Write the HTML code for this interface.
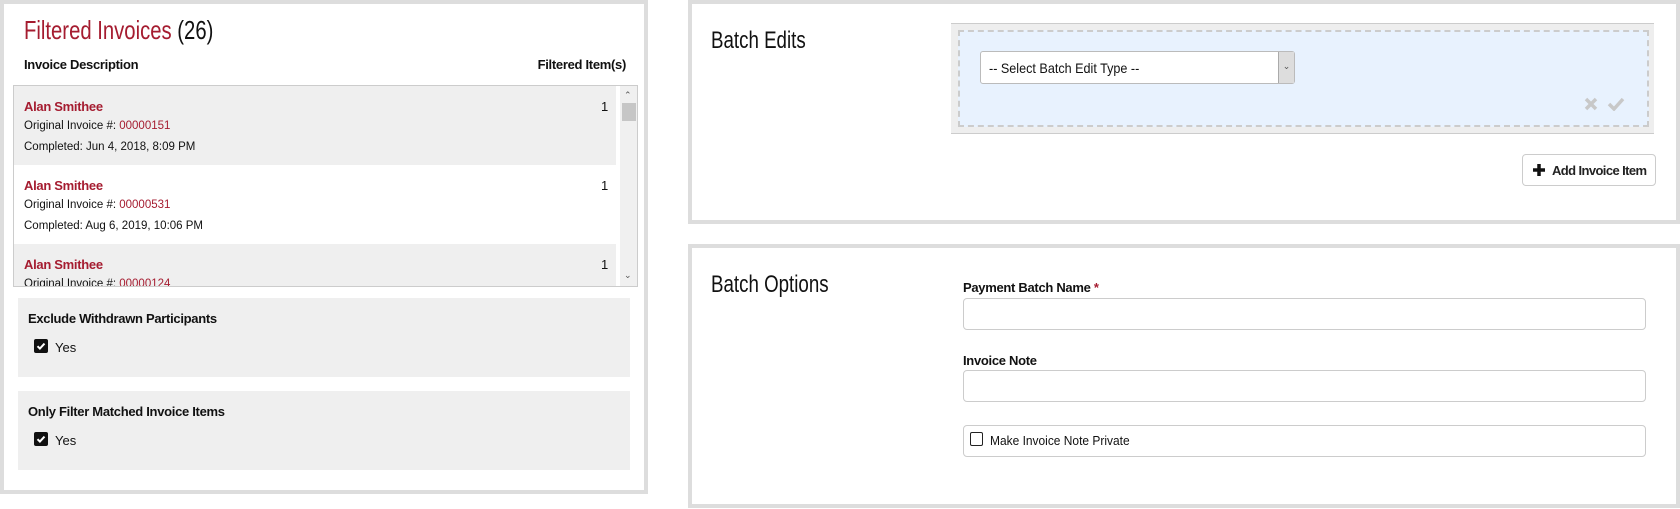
<!DOCTYPE html>
<html><head><meta charset="utf-8"><style>
*{box-sizing:border-box;margin:0;padding:0}
body{width:1680px;height:509px;background:#fff;position:relative;overflow:hidden;font-family:"Liberation Sans",Arial,sans-serif;color:#111}
.abs{position:absolute}
.panel{position:absolute;border:4px solid #ddd;background:#fff}
.cond{font-family:"Liberation Sans Narrow","Liberation Sans",sans-serif;display:inline-block;transform-origin:left center}
.red{color:#a51c30}
.row{position:absolute;left:0;width:602px;height:79px}
.row .n{position:absolute;left:10px;top:13px;font-size:13px;font-weight:bold;color:#a51c30;letter-spacing:-0.3px}
.row .i{position:absolute;left:10px;top:34px;font-size:11.5px}
.row .c{position:absolute;left:10px;top:55px;font-size:11.5px}
.row .q{position:absolute;left:587px;top:13px;font-size:13px}
.opt{position:absolute;left:18px;width:612px;height:79px;background:#efefef}
.opt .l{position:absolute;left:10px;top:13px;font-size:13px;font-weight:bold;letter-spacing:-0.3px}
.opt .cb{position:absolute;left:16px;top:41px;width:14px;height:14px;background:#111;border-radius:2px}
.opt .y{position:absolute;left:37px;top:42px;font-size:13px}
.inp{position:absolute;left:963px;width:683px;height:32px;border:1px solid #ccc;border-radius:4px;background:#fff}
.lbl{position:absolute;left:963px;font-size:13px;font-weight:bold;letter-spacing:-0.3px}
</style></head><body>

<div class="panel" style="left:0;top:0;width:648px;height:494px"></div>
<div class="abs" style="left:24px;top:15px;font-size:26px;line-height:30px"><span class="cond" style="transform:scaleX(0.78)"><span class="red">Filtered Invoices</span> (26)</span></div>
<div class="abs" style="left:24px;top:57px;font-size:13px;font-weight:bold;letter-spacing:-0.3px">Invoice Description</div>
<div class="abs" style="left:520px;width:106px;text-align:right;top:57px;font-size:13px;font-weight:bold;letter-spacing:-0.3px">Filtered Item(s)</div>

<div class="abs" style="left:13px;top:85px;width:625px;height:202px;border:1px solid #ccc;overflow:hidden;background:#fff">
  <div class="row" style="top:0;background:#efefef"><div class="n">Alan Smithee</div><div class="i">Original Invoice #: <span class="red">00000151</span></div><div class="c">Completed: Jun 4, 2018, 8:09 PM</div><div class="q">1</div></div>
  <div class="row" style="top:79px;background:#fff"><div class="n">Alan Smithee</div><div class="i">Original Invoice #: <span class="red">00000531</span></div><div class="c">Completed: Aug 6, 2019, 10:06 PM</div><div class="q">1</div></div>
  <div class="row" style="top:158px;background:#efefef"><div class="n">Alan Smithee</div><div class="i">Original Invoice #: <span class="red">00000124</span></div><div class="c">Completed</div><div class="q">1</div></div>
  <div class="abs" style="left:606px;top:0;width:17px;height:200px;background:#f0f0f0">
    <div class="abs" style="left:4px;top:4px;font-size:9px;color:#555">&#8963;</div>
    <div class="abs" style="left:2px;top:17px;width:14px;height:18px;background:#c6c6c6"></div>
    <div class="abs" style="left:4px;top:184px;font-size:9px;color:#555">&#8964;</div>
  </div>
</div>

<div class="opt" style="top:298px"><div class="l">Exclude Withdrawn Participants</div><div class="cb"><svg width="14" height="14" viewBox="0 0 14 14"><path d="M3.5 7.2l2.4 2.4 4.6-5" stroke="#fff" stroke-width="2" fill="none"/></svg></div><div class="y">Yes</div></div>
<div class="opt" style="top:391px"><div class="l">Only Filter Matched Invoice Items</div><div class="cb"><svg width="14" height="14" viewBox="0 0 14 14"><path d="M3.5 7.2l2.4 2.4 4.6-5" stroke="#fff" stroke-width="2" fill="none"/></svg></div><div class="y">Yes</div></div>

<div class="panel" style="left:688px;top:0;width:992px;height:224px"></div>
<div class="abs" style="left:711px;top:26px;font-size:24px;line-height:30px"><span class="cond" style="transform:scaleX(0.78)">Batch Edits</span></div>
<div class="abs" style="left:951px;top:23px;width:703px;height:111px;background:#eee;border-top:1px solid #ccc;border-bottom:1px solid #ccc"></div>
<div class="abs" style="left:958px;top:30px;width:691px;height:97px;background:#e8f2fe;border:2px dashed #ccc"></div>
<div class="abs" style="left:980px;top:51px;width:315px;height:33px;background:#fff;border:1px solid #bbb;border-radius:3px;font-size:14px;padding:8px 0 0 8px"><span class="cond" style="transform:scaleX(0.9)">-- Select Batch Edit Type --</span></div>
<div class="abs" style="left:1278px;top:52px;width:16px;height:31px;background:#ddd;border-left:1px solid #aaa;font-size:9px;color:#555;text-align:center;padding-top:9px">&#8964;</div>
<svg class="abs" style="left:1584px;top:97px" width="14" height="14" viewBox="0 0 14 14"><path d="M2 2l10 10M12 2L2 12" stroke="#c8c8c8" stroke-width="3.5"/></svg>
<svg class="abs" style="left:1607px;top:97px" width="18" height="14" viewBox="0 0 18 14"><path d="M2 7l5 5 9-10" stroke="#c8c8c8" stroke-width="3.5" fill="none"/></svg>
<div class="abs" style="left:1522px;top:154px;width:134px;height:32px;border:1px solid #ccc;border-radius:4px;background:#fff;font-size:13px;font-weight:bold;letter-spacing:-0.6px;padding:8px 0 0 29px;color:#222;white-space:nowrap">Add Invoice Item</div>
<svg class="abs" style="left:1532px;top:163px" width="14" height="14" viewBox="0 0 14 14"><path d="M7 1v12M1 7h12" stroke="#111" stroke-width="3.5"/></svg>

<div class="panel" style="left:688px;top:244px;width:992px;height:264px"></div>
<div class="abs" style="left:711px;top:270px;font-size:24px;line-height:30px"><span class="cond" style="transform:scaleX(0.78)">Batch Options</span></div>
<div class="lbl" style="top:280px">Payment Batch Name <span class="red">*</span></div>
<div class="inp" style="top:298px"></div>
<div class="lbl" style="top:353px">Invoice Note</div>
<div class="inp" style="top:370px"></div>
<div class="inp" style="top:425px;height:32px"></div>
<div class="abs" style="left:970px;top:432px;width:13px;height:14px;border:1.5px solid #222;border-radius:2px;background:#fff"></div>
<div class="abs" style="left:990px;top:433px;font-size:13px"><span class="cond" style="transform:scaleX(0.92)">Make Invoice Note Private</span></div>

</body></html>
